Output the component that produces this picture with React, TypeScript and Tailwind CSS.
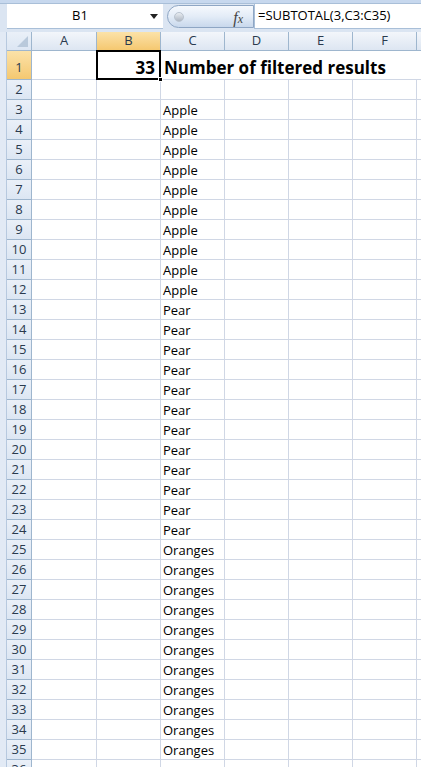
import React from 'react';

const cols = ['A', 'B', 'C', 'D', 'E', 'F'];

// rows 3..36 with values in column C
const dataRows: { n: number; value: string }[] = Array.from({ length: 34 }, (_, i) => {
  const n = i + 3;
  let value = '';
  if (n <= 12) value = 'Apple';
  else if (n <= 24) value = 'Pear';
  else if (n <= 35) value = 'Oranges';
  return { n, value };
});

function RowHeader({ n, active, tall }: { n: number; active?: boolean; tall?: boolean }) {
  return (
    <div
      className={
        'w-[25px] shrink-0 flex items-end justify-center border-r border-b border-[#9eb6ce] text-[13px] text-[#2a3a4e] leading-none ' +
        (tall ? 'h-[29px] pb-[5px] ' : 'h-[20px] pb-[3px] ') +
        (active
          ? 'bg-gradient-to-b from-[#fbe2a8] to-[#f5c870]'
          : 'bg-gradient-to-b from-[#eaf0f8] to-[#dce6f3]')
      }
    >
      {n}
    </div>
  );
}

function Cell({ children, w }: { children?: React.ReactNode; w: string }) {
  return (
    <div
      className={
        w +
        ' h-[20px] shrink-0 border-r border-b border-[#d0d7e5] pl-[2px] flex items-end pb-[2px] text-[13px] text-black leading-none whitespace-nowrap'
      }
    >
      {children}
    </div>
  );
}

export default function App() {
  return (
    <div className="w-[421px] h-[767px] overflow-hidden bg-[#dbe5f2] font-['Open_Sans',sans-serif]">
      {/* ribbon edge */}
      <div className="h-[4px] bg-[#c7d8ee] border-b border-[#a9bfd8]" />

      {/* formula bar */}
      <div className="h-[25px] flex items-stretch bg-[#dbe5f2]">
        <div className="w-[7px] shrink-0" />
        <div className="w-[156px] shrink-0 bg-white border-b border-[#a9bfd8] flex items-center relative">
          <span className="flex-1 text-center text-[13px] text-black pr-[10px]">B1</span>
          <svg className="absolute right-[5px] top-[10px]" width="8" height="5" viewBox="0 0 8 5">
            <path d="M0 0h8L4 5z" fill="#222" />
          </svg>
        </div>
        <div className="w-[4px] shrink-0" />
        <div className="w-[87px] shrink-0 my-[1px] rounded-l-full border border-[#8ea6c4] bg-gradient-to-b from-[#f6f9fd] via-[#e3ecf7] to-[#c8d8ec] flex items-center relative">
          <div className="ml-[6px] w-[10px] h-[10px] rounded-full bg-gradient-to-b from-[#e9edf2] to-[#aeb7c3] border border-[#b9c3cf]" />
          <span className="absolute right-[10px] top-[0px] text-[16px] italic text-[#444] font-['Liberation_Serif',serif]">
            f<span className="text-[12px]">x</span>
          </span>
        </div>
        <div className="flex-1 bg-white border-l border-[#a9bfd8] border-b flex items-center pl-[3px] text-[13px] text-black whitespace-nowrap">
          =SUBTOTAL(3,C3:C35)
        </div>
      </div>

      <div className="h-[3px]" />

      {/* sheet */}
      <div className="flex">
        <div className="w-[7px] shrink-0 bg-[#e2eaf5] border-r border-[#b7c9df]" />
        <div className="flex-1 bg-white">
          {/* column headers */}
          <div className="flex h-[19px]">
            <div className="w-[25px] shrink-0 border-r border-b border-[#9eb6ce] bg-gradient-to-b from-[#eaf0f8] to-[#dce6f3] relative">
              <svg className="absolute right-[3px] bottom-[3px]" width="11" height="11" viewBox="0 0 11 11">
                <path d="M11 0V11H0z" fill="#b9c9db" />
              </svg>
            </div>
            {cols.map((c) => (
              <div
                key={c}
                className={
                  (c === 'A' ? 'w-[65px] ' : 'w-[64px] ') +
                  'shrink-0 border-r border-b border-[#9eb6ce] flex items-center justify-center text-[13px] text-[#2a3a4e] ' +
                  (c === 'B'
                    ? 'bg-gradient-to-b from-[#fbe2a8] to-[#f5c870]'
                    : 'bg-gradient-to-b from-[#f3f6fb] to-[#dde6f2]')
                }
              >
                {c}
              </div>
            ))}
            <div className="flex-1 border-b border-[#9eb6ce] bg-gradient-to-b from-[#f3f6fb] to-[#dde6f2]" />
          </div>

          {/* row 1 */}
          <div className="flex h-[29px]">
            <RowHeader n={1} active tall />
            <div className="w-[65px] h-[29px] shrink-0 border-r border-b border-[#d0d7e5]" />
            <div className="w-[64px] h-[29px] shrink-0 relative border-r border-b border-[#d0d7e5] flex items-end justify-end pr-[5px] pb-[3px] text-[17px] font-bold text-black leading-none">
              33
              <div className="absolute -top-[1px] -left-[1px] w-[65px] h-[30px] border-2 border-black" />
              <div className="absolute -bottom-[3px] -right-[3px] w-[5px] h-[5px] bg-black border border-white" />
            </div>
            <div className="w-[64px] h-[29px] shrink-0 border-b border-[#d0d7e5] flex items-end pl-[3px] pb-[3px] text-[17px] font-bold text-black leading-none whitespace-nowrap overflow-visible">
              Number of filtered results
            </div>
            <div className="flex-1 border-b border-[#d0d7e5]" />
          </div>

          {/* row 2 */}
          <div className="flex">
            <RowHeader n={2} />
            <Cell w="w-[65px]" />
            <Cell w="w-[64px]" />
            <Cell w="w-[64px]" />
            <Cell w="w-[64px]" />
            <Cell w="w-[64px]" />
            <Cell w="w-[64px]" />
            <div className="flex-1 h-[20px] border-b border-[#d0d7e5]" />
          </div>

          {dataRows.map((r) => (
            <div key={r.n} className="flex">
              <RowHeader n={r.n} />
              <Cell w="w-[65px]" />
              <Cell w="w-[64px]" />
              <Cell w="w-[64px]">{r.value}</Cell>
              <Cell w="w-[64px]" />
              <Cell w="w-[64px]" />
              <Cell w="w-[64px]" />
              <div className="flex-1 h-[20px] border-b border-[#d0d7e5]" />
            </div>
          ))}
        </div>
      </div>
    </div>
  );
}
